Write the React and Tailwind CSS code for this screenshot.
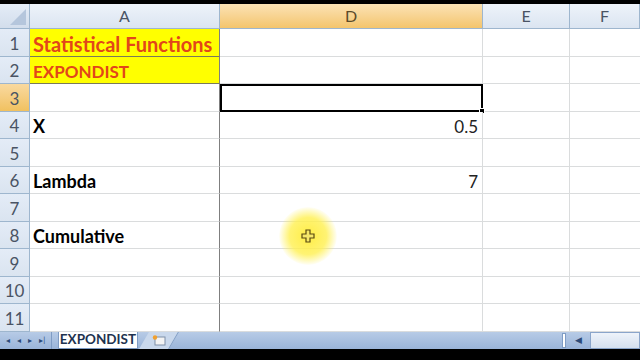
import React from "react";

const cols = [
  { key: "A", w: "w-[190px]" },
  { key: "D", w: "w-[263px]" },
  { key: "E", w: "w-[87px]" },
  { key: "F", w: "flex-1" },
];

const rows = [
  { n: 1, a: "Statistical Functions", hl: true, size: "text-[20px]" },
  { n: 2, a: "EXPONDIST", hl: true, size: "text-[17px]" },
  { n: 3, sel: true },
  { n: 4, a: "X", d: "0.5" },
  { n: 5 },
  { n: 6, a: "Lambda", d: "7" },
  { n: 7 },
  { n: 8, a: "Cumulative" },
  { n: 9 },
  { n: 10 },
  { n: 11 },
];

const Row = ({ r }) => (
  <div className="flex h-[27.5px]">
    <div
      className={`w-[30px] flex items-center justify-center pt-[2px] border-r border-b border-[#9eb6ce] text-[17px] text-[#4a5464] ${
        r.sel ? "bg-gradient-to-b from-[#f9d99f] to-[#f1c15f]" : "bg-gradient-to-b from-[#e4ecf7] to-[#dae4f0]"
      }`}
    >
      {r.n}
    </div>
    <div
      className={`w-[190px] flex items-center pl-[3px] pt-[3px] border-r font-bold whitespace-nowrap overflow-hidden ${r.size || "text-[18px]"} ${
        r.hl
          ? "bg-[#ffff00] text-[#e2461a] border-b border-b-[#7a7a5a] border-r-[#7f7f7f]"
          : "bg-white text-black border-b border-b-[#dadcdd] border-r-[#7f7f7f]"
      }`}
    >
      {r.a}
    </div>
    <div
      className={`w-[263px] flex items-center justify-end pr-[4px] pt-[3px] text-[17px] text-[#222] bg-white relative ${
        r.sel ? "border-2 border-black" : "border-r border-b border-[#dadcdd]"
      }`}
    >
      {r.d}
      {r.sel && (
        <div className="absolute -right-[4px] -bottom-[4px] w-[6px] h-[6px] bg-black border border-white" />
      )}
    </div>
    <div className="w-[87px] bg-white border-r border-b border-[#dadcdd]" />
    <div className="flex-1 bg-white border-b border-[#dadcdd]" />
  </div>
);

export default function App() {
  return (
    <div
      className="w-[640px] h-[360px] bg-black flex flex-col overflow-hidden relative"
      style={{ fontFamily: "Lato, 'Open Sans', sans-serif" }}
    >
      <div className="h-[4px]" />
      <div className="flex h-[25px] text-[16px] text-[#4a5464]">
        <div className="w-[30px] bg-gradient-to-b from-[#e4ecf7] to-[#d3deec] border-r border-b border-[#9eb6ce] relative overflow-hidden">
          <svg className="absolute right-[3px] bottom-[3px]" width="16" height="16" viewBox="0 0 16 16">
            <polygon points="16,0 16,16 0,16" fill="#b5c6dc" />
          </svg>
        </div>
        {cols.map((c) => (
          <div
            key={c.key}
            className={`${c.w} flex items-center justify-center border-r border-b border-[#9eb6ce] ${
              c.key === "D"
                ? "bg-gradient-to-b from-[#fbe2b4] to-[#f4c56c] text-[#5a4a2a]"
                : "bg-gradient-to-b from-[#eef3fa] to-[#dbe5f1]"
            }`}
          >
            {c.key}
          </div>
        ))}
      </div>
      {rows.map((r) => (
        <Row key={r.n} r={r} />
      ))}
      <div className="flex h-[17px] bg-gradient-to-b from-[#b7cbe6] to-[#9ab4d9] items-stretch">
        <div className="w-[52px] flex items-center justify-around px-[2px] text-[8px] text-[#2c4a78] border-r border-[#7f9cc4]">
          <span>◂</span>
          <span>◂</span>
          <span>▸</span>
          <span>▸|</span>
        </div>
        <div className="ml-[6px] w-[80px] bg-white flex items-center justify-center text-[13.5px] font-bold text-[#1e3350] border-x border-b border-[#7f9cc4]">
          EXPONDIST
        </div>
        <div className="ml-[6px] w-[30px] flex items-center justify-center bg-[#c9d8ec] border-r border-[#7f9cc4] -skew-x-[30deg]">
          <svg width="14" height="11" viewBox="0 0 14 11" className="skew-x-[30deg]">
            <rect x="3" y="2" width="10" height="8" fill="#f3f3f3" stroke="#7f8fa8" />
            <circle cx="3" cy="2.5" r="2.2" fill="#f0a030" />
          </svg>
        </div>
        <div className="flex-1" />
        <div className="w-[4px] bg-white border border-[#7f9cc4] my-[1px]" />
        <div className="w-[24px] flex items-center justify-center text-[9px] text-[#2c4a78]">◀</div>
        <div className="w-[50px] bg-gradient-to-b from-[#eef3fa] to-[#d4e0ef] border border-[#8aa5cb]" />
      </div>
      <div className="flex-1 bg-black" />
      <div
        className="absolute left-[279px] top-[207px] w-[58px] h-[58px] rounded-full"
        style={{ background: "radial-gradient(circle, rgba(255,236,60,0.95) 0%, rgba(255,240,80,0.8) 45%, rgba(255,245,120,0) 72%)" }}
      />
      <svg className="absolute left-[301px] top-[229px]" width="14" height="14" viewBox="0 0 14 14">
        <path d="M5 1h4v4h4v4h-4v4h-4v-4h-4v-4h4z" fill="#f5e76a" stroke="#5a4a10" strokeWidth="1.2" />
      </svg>
    </div>
  );
}
